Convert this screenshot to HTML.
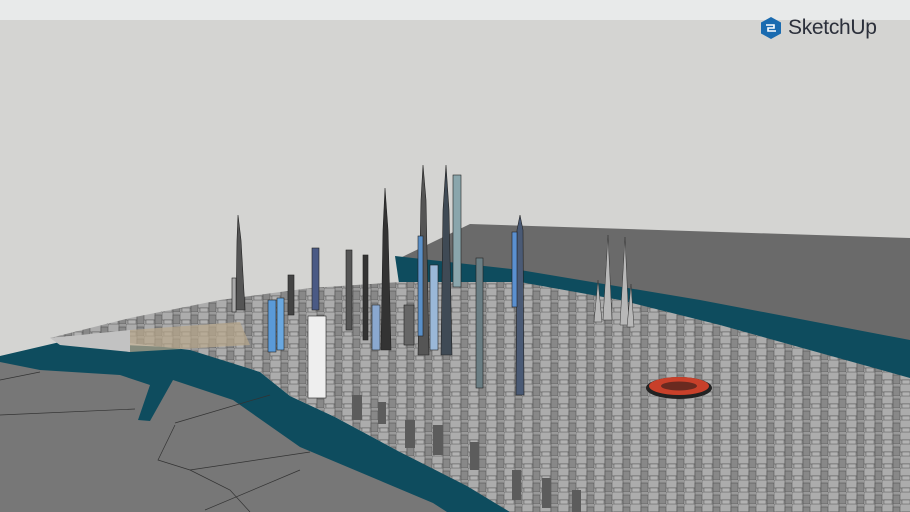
<!DOCTYPE html>
<html><head><meta charset="utf-8"><style>
html,body{margin:0;padding:0;width:910px;height:512px;overflow:hidden;background:#d4d4d2;font-family:"Liberation Sans",sans-serif}
.bar{position:absolute;left:0;top:0;width:910px;height:20px;background:#e8eaea}
.logo{position:absolute;left:760px;top:16px;display:flex;align-items:center;font-size:21px;color:#2b2f3a;letter-spacing:-0.3px}
svg.scene{position:absolute;left:0;top:0}
</style></head><body>
<svg class="scene" width="910" height="512" viewBox="0 0 910 512">
<defs>
<pattern id="blk" width="18" height="12" patternUnits="userSpaceOnUse">
<rect width="18" height="12" fill="#9a9a9a"/>
<rect x="0" y="0" width="11" height="8" fill="#acacac" stroke="#4a4a4a" stroke-width="0.5"/>
<rect x="11" y="3" width="7" height="9" fill="#888" stroke="#4a4a4a" stroke-width="0.5"/>
<rect x="2" y="8" width="8" height="4" fill="#b2b2b2" stroke="#4a4a4a" stroke-width="0.4"/>
</pattern>
</defs>
<rect x="0" y="20" width="910" height="492" fill="#d4d4d2"/>
<polygon points="470,224 910,238 910,512 400,512 400,258" fill="#6a6a6a"/>
<polygon points="395,256 520,270 700,300 910,340 910,385 600,330 400,290" fill="#0e4c5e"/>
<!-- left water -->
<polygon points="0,356 60,342 190,348 260,372 290,396 335,417 400,452 467,486 510,512 0,512" fill="#0e4c5e"/>
<!-- left land -->
<polygon points="0,362 40,370 120,375 150,385 138,420 150,421 173,380 233,400 300,447 433,503 447,512 0,512" fill="#777"/>
<g stroke="#333" stroke-width="0.7" fill="none">
<line x1="0" y1="415" x2="135" y2="409"/><line x1="175" y1="423" x2="270" y2="395"/>
<polyline points="175,425 158,460 190,470 230,490 250,512"/><line x1="190" y1="470" x2="310" y2="452"/>
<line x1="205" y1="510" x2="300" y2="470"/><line x1="0" y1="380" x2="40" y2="372"/>
</g>
<!-- city -->
<polygon points="50,338 130,318 220,300 310,288 400,282 520,282 620,300 720,325 910,378 910,512 510,512 467,486 400,452 335,417 290,396 260,372 190,350 120,342" fill="url(#blk)"/>
<polygon points="130,330 240,322 250,345 130,352" fill="#b9a88c" opacity="0.7"/>
<polygon points="50,338 130,330 130,352 60,345" fill="#c2c2c2"/>
<g fill="#5c5c5c"><rect x="352" y="395" width="10" height="25"/><rect x="378" y="402" width="8" height="22"/><rect x="405" y="420" width="10" height="28"/><rect x="433" y="425" width="10" height="30"/><rect x="470" y="442" width="9" height="28"/><rect x="512" y="470" width="9" height="30"/><rect x="542" y="478" width="9" height="30"/><rect x="572" y="490" width="9" height="22"/></g>
<g stroke="#222" stroke-width="0.6">
<polygon points="238,215 241,240 245,310 236,310 237,240" fill="#555"/>
<rect x="232" y="278" width="4" height="34" fill="#aaa"/>
<rect x="288" y="275" width="6" height="40" fill="#444"/>
<rect x="312" y="248" width="7" height="62" fill="#4a5a85"/>
<rect x="268" y="300" width="8" height="52" fill="#5a9ad8"/>
<rect x="277" y="298" width="7" height="52" fill="#6aa8e0"/>
<rect x="308" y="316" width="18" height="82" fill="#eee"/>
<rect x="346" y="250" width="6" height="80" fill="#555"/>
<rect x="363" y="255" width="5" height="85" fill="#333"/>
<polygon points="385,188 388,230 391,350 381,350 383,230" fill="#333"/>
<rect x="372" y="305" width="8" height="45" fill="#8aa8d0"/>
<polygon points="423,165 426,200 429,355 418,355 421,200" fill="#555"/>
<rect x="418" y="236" width="5" height="100" fill="#5a90c8"/>
<polygon points="446,165 449,210 452,355 441,355 443,210" fill="#3f4a55"/>
<rect x="453" y="175" width="8" height="112" fill="#8aa6ac"/>
<rect x="430" y="265" width="8" height="85" fill="#9ab8d8"/>
<rect x="476" y="258" width="7" height="130" fill="#6a7e84"/>
<polygon points="520,215 523,230 524,395 516,395 517,230" fill="#4a5a75"/>
<rect x="512" y="232" width="5" height="75" fill="#5a90d0"/>
<rect x="404" y="305" width="10" height="40" fill="#666"/>
</g>
<g fill="#b8b8b8" stroke="#333" stroke-width="0.5">
<polygon points="608,235 612,320 603,320"/><polygon points="625,237 629,325 620,325"/>
<polygon points="598,280 602,322 594,322"/><polygon points="631,284 634,327 627,327"/>
</g>
<ellipse cx="679" cy="388" rx="33" ry="11" fill="#222"/>
<ellipse cx="679" cy="386" rx="30" ry="9" fill="#c8402a"/>
<ellipse cx="679" cy="386" rx="18" ry="4.5" fill="#6a2a20"/>
</svg>
<div class="bar"></div>
<div class="logo"><svg width="22" height="24" viewBox="0 0 22 24" style="margin-right:6px"><polygon points="11,1 21,6.5 21,17.5 11,23 1,17.5 1,6.5" fill="#1a6bb0"/><path d="M6 9 h8 v3 h-6 v3 h8" stroke="#fff" stroke-width="1.6" fill="none"/></svg>SketchUp</div>
</body></html>
